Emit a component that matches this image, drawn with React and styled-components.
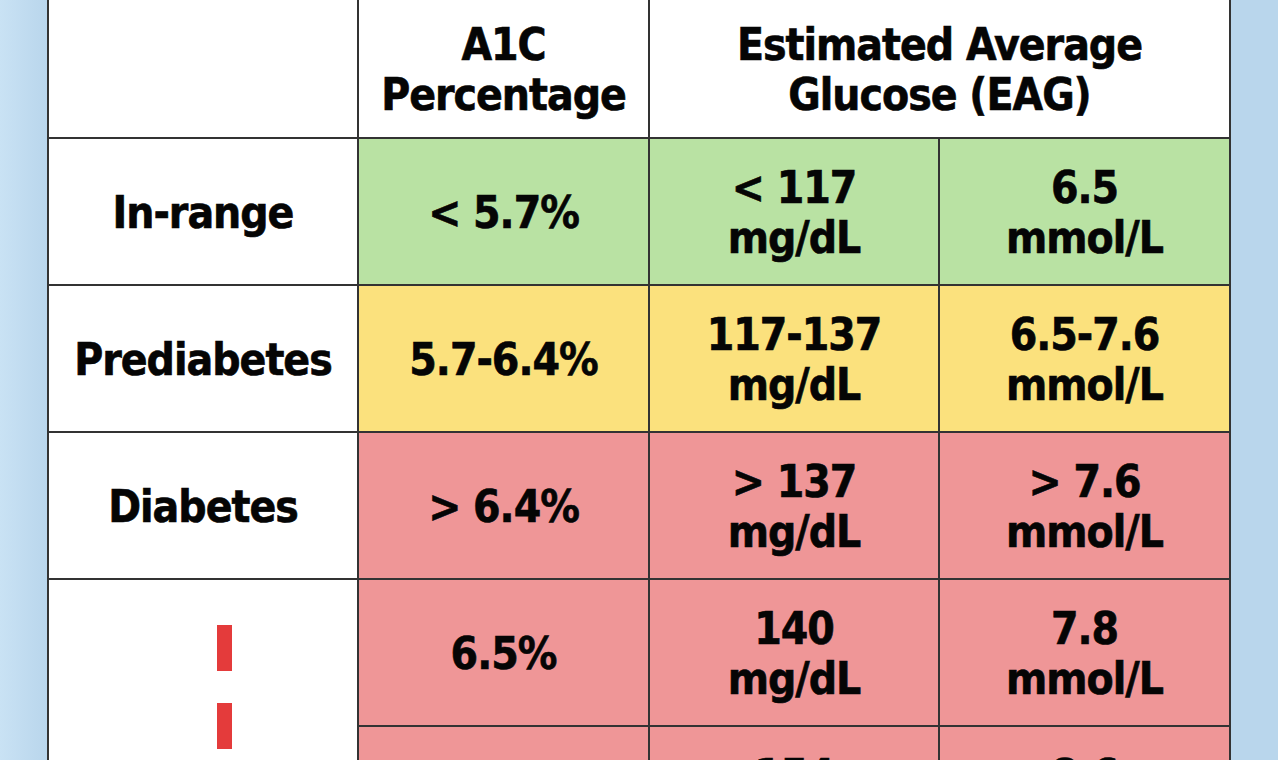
import React from 'react';
import styled, {createGlobalStyle} from "styled-components";

const GlobalStyle = createGlobalStyle`
  html, body {
    margin: 0;
    padding: 0;
    overflow: hidden;
    background: #c2dcf0;
  }
  #root {
    height: 760px;
  }
`;

const COLORS = {
    white: "#ffffff",
    green: "#b9e2a3",
    yellow: "#fbe17d",
    red: "#ef9697"
};

const rows = [
    {label: "In-range", tone: "green", a1c: "< 5.7%", mg: ["< 117", "mg/dL"], mmol: ["6.5", "mmol/L"]},
    {label: "Prediabetes", tone: "yellow", a1c: "5.7-6.4%", mg: ["117-137", "mg/dL"], mmol: ["6.5-7.6", "mmol/L"]},
    {label: "Diabetes", tone: "red", a1c: "> 6.4%", mg: ["> 137", "mg/dL"], mmol: ["> 7.6", "mmol/L"]}
];

const extra = [
    {tone: "red", a1c: "6.5%", mg: ["140", "mg/dL"], mmol: ["7.8", "mmol/L"]},
    {tone: "red", a1c: "7%", mg: ["154", "mg/dL"], mmol: ["8.6", "mmol/L"]}
];

function App() {
    return (
        <>
            <GlobalStyle/>
            <Page>
                <Table>
                    <Cell $tone="white"/>
                    <Cell $tone="white">A1C<br/>Percentage</Cell>
                    <Cell $tone="white" $span={2}>Estimated Average<br/>Glucose (EAG)</Cell>

                    {rows.map((row) => (
                        <React.Fragment key={row.label}>
                            <Cell $tone="white">{row.label}</Cell>
                            <Cell $tone={row.tone}>{row.a1c}</Cell>
                            <Cell $tone={row.tone}>{row.mg[0]}<br/>{row.mg[1]}</Cell>
                            <Cell $tone={row.tone}>{row.mmol[0]}<br/>{row.mmol[1]}</Cell>
                        </React.Fragment>
                    ))}

                    <MarkerCell>
                        <DashLine/>
                    </MarkerCell>
                    {extra.map((row) => (
                        <React.Fragment key={row.a1c}>
                            <Cell $tone={row.tone}>{row.a1c}</Cell>
                            <Cell $tone={row.tone}>{row.mg[0]}<br/>{row.mg[1]}</Cell>
                            <Cell $tone={row.tone}>{row.mmol[0]}<br/>{row.mmol[1]}</Cell>
                        </React.Fragment>
                    ))}
                </Table>
            </Page>
        </>
    );
}

export default App;

const Page = styled.div`
  display: flex;
  padding-left: 47px;
  height: 760px;
  overflow: hidden;
  background: linear-gradient(to right, #c9e2f4 0, #b9d6ec 47px);
`;

const Table = styled.div`
  display: grid;
  grid-template-columns: 308px 289px 288px 289px;
  grid-template-rows: 137px repeat(5, 145px);
  column-gap: 2px;
  row-gap: 2px;
  padding: 0 2px 2px 2px;
  background: #333333;
  align-self: flex-start;
`;

const Cell = styled.div`
  grid-column: span ${p => p.$span || 1};
  background: ${p => COLORS[p.$tone]};
  display: flex;
  align-items: center;
  justify-content: center;
  text-align: center;
  padding-top: 3px;
  font-family: "DejaVu Sans Condensed", "DejaVu Sans", sans-serif;
  font-stretch: condensed;
  font-weight: bold;
  font-size: 44px;
  line-height: 50px;
  letter-spacing: -1px;
  color: #050505;
  -webkit-text-stroke: 0.6px #050505;
`;

const MarkerCell = styled.div`
  grid-row: span 2;
  background: #ffffff;
  display: flex;
  flex-direction: column;
  align-items: center;
  padding-top: 45px;
  padding-left: 42px;
  box-sizing: border-box;
`;

const DashLine = styled.div`
  width: 15px;
  height: 240px;
  background: repeating-linear-gradient(to bottom, #e43b3b 0, #e43b3b 46px, transparent 46px, transparent 78px);
`;
